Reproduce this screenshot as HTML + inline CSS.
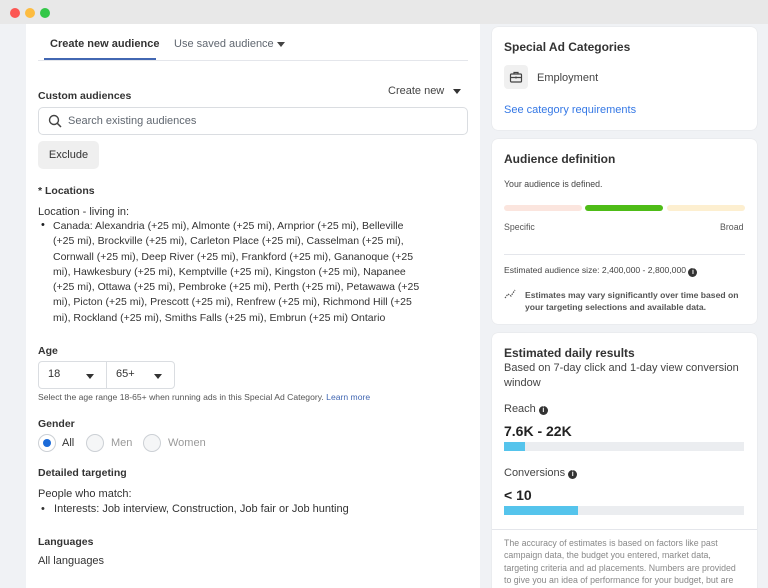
<!DOCTYPE html>
<html><head><style>
*{margin:0;padding:0;box-sizing:border-box}
html,body{width:768px;height:588px;overflow:hidden}
body{background:#f0f2f5;font-family:"Liberation Sans",sans-serif;color:#1c1e21;position:relative}
.bar{position:absolute;left:0;top:0;width:768px;height:24px;background:#e8e8e8}
.dot{position:absolute;top:8px;width:10px;height:10px;border-radius:50%}
.left{position:absolute;left:26px;top:24px;width:454px;height:564px;background:#fff}
.a{position:absolute;white-space:nowrap}
.card{position:absolute;left:492px;width:265px;background:#fff;border-radius:6px;box-shadow:0 0 1px rgba(0,0,0,.15);overflow:hidden}
.b{font-weight:bold}
.g{color:#606770}
.tri{display:inline-block;width:0;height:0;border-left:4px solid transparent;border-right:4px solid transparent;border-top:5px solid #333;vertical-align:middle}
.loc{position:absolute;left:53px;top:219px;font-size:10.5px;line-height:15.3px;color:#333;white-space:nowrap}
.radio{position:absolute;width:18px;height:18px;border-radius:50%;border:1px solid #ccd0d5;background:#f5f6f7}
</style></head><body>
<div class="bar"></div>
<div class="dot" style="left:10px;background:#fc5753"></div>
<div class="dot" style="left:25px;background:#fdbc40"></div>
<div class="dot" style="left:40px;background:#33c748"></div>
<div class="left">
<div class="a b" style="left:24px;top:14px;font-size:11px;color:#333">Create new audience</div>
<div style="position:absolute;left:18px;top:34px;width:112px;height:2px;background:#4267b2"></div>
<div style="position:absolute;left:12px;top:36px;width:430px;height:1px;background:#e4e6eb"></div>
<div class="a g" style="left:148px;top:14px;font-size:11px">Use saved audience <span class="tri" style="border-top-color:#444"></span></div>
<div class="a b" style="left:12px;top:66px;font-size:10.5px;color:#333">Custom audiences</div>
<div class="a" style="left:362px;top:61px;font-size:11px;color:#444">Create new &nbsp;&nbsp;<span class="tri"></span></div>
<div style="position:absolute;left:12px;top:83px;width:430px;height:28px;border:1px solid #dadde1;border-radius:5px"></div>
<svg style="position:absolute;left:22px;top:90px" width="14" height="14" viewBox="0 0 14 14"><circle cx="6" cy="6" r="4.5" fill="none" stroke="#444" stroke-width="1.4"/><path d="M9.3 9.3L13 13" stroke="#444" stroke-width="1.5"/></svg>
<div class="a g" style="left:42px;top:91px;font-size:11px">Search existing audiences</div>
<div style="position:absolute;left:12px;top:117px;width:61px;height:28px;background:#efefef;border-radius:5px;font-size:11px;color:#333;text-align:center;line-height:28px">Exclude</div>
<div class="a b" style="left:12px;top:161px;font-size:10.5px;color:#333">* Locations</div>
<div class="a" style="left:12px;top:182px;font-size:11px;color:#333">Location - living in:</div>
</div>
<div class="a" style="left:41px;top:219px;font-size:11px">•</div>
<div class="loc">Canada: Alexandria (+25 mi), Almonte (+25 mi), Arnprior (+25 mi), Belleville<br>(+25 mi), Brockville (+25 mi), Carleton Place (+25 mi), Casselman (+25 mi),<br>Cornwall (+25 mi), Deep River (+25 mi), Frankford (+25 mi), Gananoque (+25<br>mi), Hawkesbury (+25 mi), Kemptville (+25 mi), Kingston (+25 mi), Napanee<br>(+25 mi), Ottawa (+25 mi), Pembroke (+25 mi), Perth (+25 mi), Petawawa (+25<br>mi), Picton (+25 mi), Prescott (+25 mi), Renfrew (+25 mi), Richmond Hill (+25<br>mi), Rockland (+25 mi), Smiths Falls (+25 mi), Embrun (+25 mi) Ontario</div>
<div class="a b" style="left:38px;top:345px;font-size:10.5px;color:#333">Age</div>
<div style="position:absolute;left:38px;top:361px;width:137px;height:28px;border:1px solid #dadde1;border-radius:4px"></div>
<div style="position:absolute;left:106px;top:362px;width:1px;height:26px;background:#dadde1"></div>
<div class="a" style="left:48px;top:368px;font-size:11px;color:#333">18</div>
<div class="a" style="left:86px;top:368px"><span class="tri"></span></div>
<div class="a" style="left:116px;top:368px;font-size:11px;color:#333">65+</div>
<div class="a" style="left:154px;top:368px"><span class="tri"></span></div>
<div class="a" style="left:38px;top:392px;font-size:8.6px;color:#555">Select the age range 18-65+ when running ads in this Special Ad Category. <span style="color:#4267b2">Learn more</span></div>
<div class="a b" style="left:38px;top:418px;font-size:10.5px;color:#333">Gender</div>
<div class="radio" style="left:38px;top:434px;background:#fff"><div style="position:absolute;left:4px;top:4px;width:8px;height:8px;border-radius:50%;background:#1b6ad8"></div></div>
<div class="a" style="left:62px;top:437px;font-size:11px;color:#333">All</div>
<div class="radio" style="left:86px;top:434px"></div>
<div class="a" style="left:111px;top:437px;font-size:11px;color:#999">Men</div>
<div class="radio" style="left:143px;top:434px"></div>
<div class="a" style="left:168px;top:437px;font-size:11px;color:#999">Women</div>
<div class="a b" style="left:38px;top:467px;font-size:10.5px;color:#333">Detailed targeting</div>
<div class="a" style="left:38px;top:488px;font-size:11px;color:#333">People who match:</div>
<div class="a" style="left:41px;top:503px;font-size:11px;color:#333">•&nbsp;&nbsp; Interests: Job interview, Construction, Job fair or Job hunting</div>
<div class="a b" style="left:38px;top:536px;font-size:10.5px;color:#333">Languages</div>
<div class="a" style="left:38px;top:555px;font-size:11px;color:#333">All languages</div>

<div class="card" style="top:27px;height:103px">
<div class="a b" style="left:12px;top:13px;font-size:12px;color:#333">Special Ad Categories</div>
<div style="position:absolute;left:12px;top:38px;width:24px;height:24px;background:#f0f0f0;border-radius:4px"></div>
<svg style="position:absolute;left:17px;top:43px" width="14" height="14" viewBox="0 0 14 14"><rect x="1.5" y="4" width="11" height="8" rx="1" fill="none" stroke="#444" stroke-width="1.2"/><path d="M5 4V2.5h4V4M1.5 7.5h11M7 6.5v2" fill="none" stroke="#444" stroke-width="1.2"/></svg>
<div class="a" style="left:45px;top:45px;font-size:11px;color:#444">Employment</div>
<div class="a" style="left:12px;top:77px;font-size:11px;color:#3578e5">See category requirements</div>
</div>
<div class="card" style="top:139px;height:185px">
<div class="a b" style="left:12px;top:13px;font-size:12px;color:#333">Audience definition</div>
<div class="a" style="left:12px;top:40px;font-size:8.8px;color:#444">Your audience is defined.</div>
<div style="position:absolute;left:12px;top:66px;width:78px;height:6px;border-radius:3px;background:#fbe5de"></div>
<div style="position:absolute;left:93px;top:66px;width:78px;height:6px;border-radius:3px;background:#4ebc17"></div>
<div style="position:absolute;left:175px;top:66px;width:78px;height:6px;border-radius:3px;background:#fdefd0"></div>
<div class="a" style="left:12px;top:83px;font-size:8.8px;color:#555">Specific</div>
<div class="a" style="left:228px;top:83px;font-size:8.8px;color:#555">Broad</div>
<div style="position:absolute;left:12px;top:115px;width:241px;height:1px;background:#e4e6eb"></div>
<div class="a" style="left:12px;top:126px;font-size:8.6px;color:#444">Estimated audience size: 2,400,000 - 2,800,000 <span style="display:inline-block;width:9px;height:9px;border-radius:50%;background:#333;color:#fff;font-size:7px;line-height:9px;text-align:center;font-weight:bold;vertical-align:-1px">i</span></div>
<svg style="position:absolute;left:12px;top:149px" width="14" height="12" viewBox="0 0 14 12"><path d="M1 10L4 6L7 8L11 2" fill="none" stroke="#555" stroke-width="1.2" stroke-dasharray="1.5 1"/></svg>
<div class="a" style="left:33px;top:150px;font-size:8.6px;line-height:12px;color:#555;font-weight:bold">Estimates may vary significantly over time based on<br>your targeting selections and available data.</div>
</div>
<div class="card" style="top:333px;height:262px">
<div class="a b" style="left:12px;top:13px;font-size:12px;color:#333">Estimated daily results</div>
<div class="a" style="left:12px;top:28px;font-size:11px;line-height:15px;color:#444">Based on 7-day click and 1-day view conversion<br>window</div>
<div class="a" style="left:12px;top:70px;font-size:11px;color:#444">Reach <span style="display:inline-block;width:9px;height:9px;border-radius:50%;background:#333;color:#fff;font-size:7px;line-height:9px;text-align:center;font-weight:bold;vertical-align:0">i</span></div>
<div class="a b" style="left:12px;top:90px;font-size:14px;color:#222">7.6K - 22K</div>
<div style="position:absolute;left:12px;top:109px;width:240px;height:9px;background:#ebedf0"><div style="width:21px;height:9px;background:#55c4ec"></div></div>
<div class="a" style="left:12px;top:134px;font-size:11px;color:#444">Conversions <span style="display:inline-block;width:9px;height:9px;border-radius:50%;background:#333;color:#fff;font-size:7px;line-height:9px;text-align:center;font-weight:bold;vertical-align:0">i</span></div>
<div class="a b" style="left:12px;top:154px;font-size:14px;color:#222">&lt; 10</div>
<div style="position:absolute;left:12px;top:173px;width:240px;height:9px;background:#ebedf0"><div style="width:74px;height:9px;background:#55c4ec"></div></div>
<div style="position:absolute;left:0;top:196px;width:265px;height:1px;background:#e4e6eb"></div>
<div class="a" style="left:12px;top:204px;font-size:8.8px;line-height:12.3px;color:#888">The accuracy of estimates is based on factors like past<br>campaign data, the budget you entered, market data,<br>targeting criteria and ad placements. Numbers are provided<br>to give you an idea of performance for your budget, but are</div>
</div>
</body></html>
